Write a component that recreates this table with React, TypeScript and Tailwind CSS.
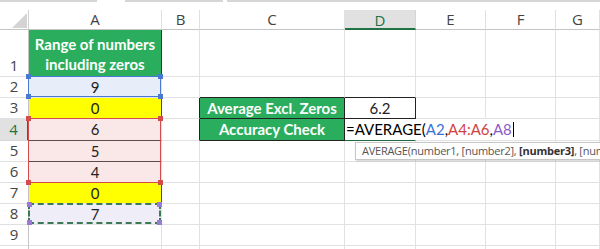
import React from "react";

type Spec = {
  r?: string;
  b?: string;
  bg?: string;
  cls?: string;
  content?: React.ReactNode;
};

const COLS = ["A", "B", "C", "D", "E", "F", "G"];
const ROWS = [1, 2, 3, 4, 5, 6, 7, 8, 9, 10];

const green = "bg-[#2aad5c] text-white font-bold text-[15px]";

const Corners = ({ color }: { color: string }) => (
  <>
    <span className={`absolute -left-[3px] -top-[3px] size-[5px] ${color}`} />
    <span className={`absolute -right-[3px] -top-[3px] size-[5px] ${color}`} />
    <span className={`absolute -left-[3px] -bottom-[3px] size-[5px] ${color}`} />
    <span className={`absolute -right-[3px] -bottom-[3px] size-[5px] ${color}`} />
  </>
);

const Formula = () => (
  <>
    <span className="pl-[1px] whitespace-nowrap text-[15px] text-black">
      =AVERAGE(<span className="text-[#3a6fd6]">A2</span>,
      <span className="text-[#d23f3f]">A4:A6</span>,
      <span className="text-[#8a5cc7]">A8</span>
      <span className="inline-block w-px h-[15px] bg-black align-[-2px] ml-[1px]" />
    </span>
    <div className="absolute left-[10px] top-[calc(100%+2px)] h-[18px] whitespace-nowrap border border-[#c6c6c6] bg-white pl-[6px] pr-2 shadow-[1px_1px_2px_rgba(0,0,0,0.2)] font-['Open_Sans',sans-serif] text-[11px] tracking-[-0.25px] leading-[16px] text-[#555]">
      AVERAGE(number1, [number2], <b className="text-[#333]">[number3]</b>, [number4], ...)
    </div>
  </>
);

const cells: Record<string, Spec> = {
  A1: {
    bg: "bg-[#2aad5c]",
    r: "border-r-[#24402e]",
    b: "border-b-[#2aad5c]",
    cls: "text-white font-bold text-[15px] leading-[20px] pt-[2px]",
    content: (
      <>
        Range of numbers
        <br />
        including zeros
      </>
    ),
  },
  A2: {
    bg: "bg-[#e8eef9]",
    cls: "relative z-20",
    content: (
      <>
        9
        <div className="absolute -left-px -top-px right-0 bottom-0 border border-[#4a79d3]">
          <Corners color="bg-[#4a79d3]" />
        </div>
      </>
    ),
  },
  A3: { bg: "bg-[#ffff00]", r: "border-r-[#4a4a4a]", content: "0" },
  A4: {
    bg: "bg-[#fae8e8]",
    b: "border-b-[#5b4d4d]",
    cls: "relative z-20",
    content: (
      <>
        6
        <div className="absolute -left-px -top-px right-0 h-[65px] border border-[#d54b4b]">
          <Corners color="bg-[#d54b4b]" />
        </div>
      </>
    ),
  },
  A5: { bg: "bg-[#fae8e8]", b: "border-b-[#5b4d4d]", content: "5" },
  A6: { bg: "bg-[#fae8e8]", content: "4" },
  A7: { bg: "bg-[#ffff00]", r: "border-r-[#4a4a4a]", content: "0" },
  A8: {
    bg: "bg-[#efedf7]",
    cls: "relative z-20",
    content: (
      <>
        7
        <div className="absolute -left-px -top-px right-0 bottom-0 border-2 border-dashed border-[#3b7a55]">
          <Corners color="bg-[#9a7ad6]" />
        </div>
      </>
    ),
  },
  B3: { r: "border-r-[#222222]" },
  B4: { r: "border-r-[#222222]" },
  C2: { b: "border-b-[#222222]" },
  D2: { b: "border-b-[#222222]" },
  C3: { bg: green, r: "border-r-[#222222]", b: "border-b-[#222222]", content: "Average Excl. Zeros" },
  C4: { bg: green, r: "border-r-[#222222]", b: "border-b-[#222222]", content: "Accuracy Check" },
  D3: { r: "border-r-[#222222]", b: "border-b-[#222222]", content: "6.2" },
  D4: { r: "border-r-transparent", b: "border-b-[#1e6b3c]", cls: "relative z-30 !justify-start", content: <Formula /> },
  E4: { r: "border-r-transparent" },
};

export default function App() {
  return (
    <div className="w-[600px] h-[249px] overflow-hidden bg-white font-['Lato','Liberation_Sans',sans-serif] text-[#222]">
      {/* bottom edge of the formula bar */}
      <div className="flex h-[10px]">
        <div className="h-[2px] w-[97px] bg-[#d6d6d6]" />
        <div className="w-[28px]" />
        <div className="h-[2px] w-[98px] bg-[#d6d6d6]" />
        <div className="w-[4px]" />
        <div className="h-[2px] flex-1 bg-[#d6d6d6]" />
      </div>

      <div className="grid grid-cols-[29px_133px_38px_145px_71px_70px_70px_1fr] grid-rows-[20px_47px_21px_21px_22px_21px_21px_21px_21px_21px_21px]">
        {/* corner */}
        <div className="relative border-r border-b border-r-[#d0d0d0] border-b-[#c4c4c4]">
          <svg className="absolute left-[12px] top-[3px]" width="15" height="15" viewBox="0 0 15 15">
            <polygon points="15,0 15,15 0,15" fill="#d4d4d4" />
          </svg>
        </div>
        {COLS.map((c) => (
          <div
            key={c}
            className={
              c === "D"
                ? "flex items-center justify-center border-r border-b-2 border-r-[#d6d6d6] border-b-[#217346] bg-[#e1e1e1] pt-[2px] font-['Open_Sans',sans-serif] text-[15px] text-[#217346]"
                : "flex items-center justify-center border-r border-b border-r-[#e0e0e0] border-b-[#c4c4c4] font-['Open_Sans',sans-serif] text-[15px] text-[#444]"
            }
          >
            {c}
          </div>
        ))}

        {ROWS.map((r) => (
          <React.Fragment key={r}>
            <div
              className={
                r === 4
                  ? "flex items-end justify-center pb-[1px] border-r-2 border-b border-r-[#217346] border-b-[#d6d6d6] bg-[#e1e1e1] font-['Open_Sans',sans-serif] text-[15px] leading-[20px] text-[#217346]"
                  : "flex items-end justify-center pb-[1px] border-r border-b border-r-[#c4c4c4] border-b-[#e0e0e0] font-['Open_Sans',sans-serif] text-[15px] leading-[20px] text-[#444]"
              }
            >
              {r}
            </div>
            {COLS.map((c) => {
              const s = cells[c + r] || {};
              return (
                <div
                  key={c}
                  className={`flex items-center justify-center text-center border-r border-b text-[15px] ${s.r || "border-r-[#e2e2e2]"} ${s.b || "border-b-[#e2e2e2]"} ${s.bg || ""} ${s.cls || ""}`}
                >
                  {s.content}
                </div>
              );
            })}
          </React.Fragment>
        ))}
      </div>
    </div>
  );
}
